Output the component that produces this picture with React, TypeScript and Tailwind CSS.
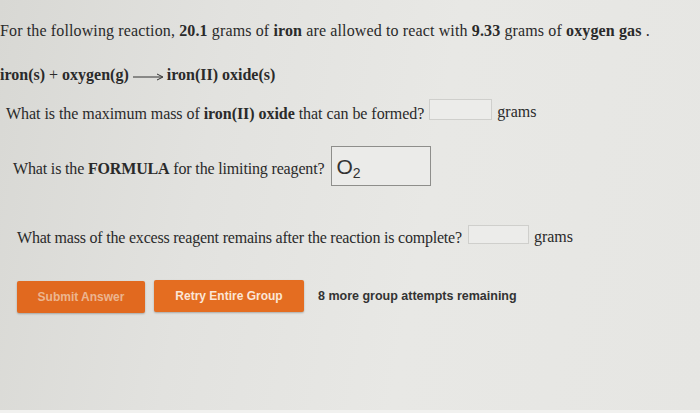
import React from 'react'

// Empty answer box, light border like the disabled inputs in the shot
function AnswerBox({ w, h }: { w: string; h: string }) {
  return <div className={`${w} ${h} shrink-0 border border-[#cfcfcc] bg-[#ececea]`} />
}

function Arrow() {
  return (
    <svg width="32" height="10" viewBox="0 0 32 10" className="mx-[3px] mb-[3px] shrink-0">
      <line x1="1" y1="5" x2="30" y2="5" stroke="#333" strokeWidth="1" />
      <path d="M25 2 L31 5 L25 8" fill="none" stroke="#333" strokeWidth="1" />
    </svg>
  )
}

export default function App() {
  return (
    <div
      className="relative w-[700px] h-[413px] overflow-hidden text-[#2a2a2a] bg-[linear-gradient(100deg,#d8d8d4_0%,#e2e2df_30%,#e8e8e5_60%,#e6e6e3_100%)]"
      style={{ fontFamily: '"Liberation Serif", "Times New Roman", serif' }}
    >
      <div className="flex flex-col pt-[21px] text-[16px] leading-[20px]">
        {/* question stem */}
        <p className="whitespace-nowrap tracking-[0.13px]">
          For the following reaction, <b>20.1</b> grams of <b>iron</b> are allowed to react with <b>9.33</b> grams of{' '}
          <b>oxygen gas</b> .
        </p>

        {/* equation */}
        <div className="mt-[24px] flex items-end whitespace-nowrap font-bold">
          <span>iron(s)</span>
          <span className="font-normal mx-[4px]">+</span>
          <span>oxygen(g)</span>
          <Arrow />
          <span>iron(II) oxide(s)</span>
        </div>

        {/* part 1 */}
        <div className="mt-[14px] ml-[6px] flex items-start whitespace-nowrap">
          <span className="mt-[5px] tracking-[-0.05px]">
            What is the maximum mass of <b>iron(II) oxide</b> that can be formed?
          </span>
          <div className="ml-[5px]">
            <AnswerBox w="w-[63px]" h="h-[21px]" />
          </div>
          <span className="ml-[5px] mt-[3px]">grams</span>
        </div>

        {/* part 2 */}
        <div className="mt-[22px] ml-[13px] flex items-start whitespace-nowrap">
          <span className="mt-[13px] tracking-[-0.16px]">
            What is the <b>FORMULA</b> for the limiting reagent?
          </span>
          <div
            className="ml-[7px] w-[100px] h-[40px] border border-[#8e8e8b] bg-[#ebebe9] pl-[4px] flex items-center text-[#333]"
            style={{ fontFamily: '"Liberation Sans", Arial, sans-serif' }}
          >
            <span className="text-[21px] leading-none">O</span>
            <span className="text-[14px] leading-none mt-[14px]">2</span>
          </div>
        </div>

        {/* part 3 */}
        <div className="mt-[39px] ml-[17px] flex items-start whitespace-nowrap">
          <span className="mt-[3px] tracking-[-0.21px]">
            What mass of the excess reagent remains after the reaction is complete?
          </span>
          <div className="ml-[6px]">
            <AnswerBox w="w-[61px]" h="h-[19px]" />
          </div>
          <span className="ml-[5px] mt-[2px]">grams</span>
        </div>

        {/* actions */}
        <div
          className="mt-[31px] ml-[17px] flex items-center gap-[9px] text-[12px] font-bold"
          style={{ fontFamily: '"Liberation Sans", Arial, sans-serif' }}
        >
          <button className="w-[128px] h-[32px] mt-[2px] rounded-[2px] bg-[#e1691f] text-[#ecb58f] shadow-[0_1px_2px_rgba(0,0,0,0.25)]">
            Submit Answer
          </button>
          <button className="w-[150px] h-[32px] rounded-[2px] bg-[#e46d21] text-[#fbe6d6] shadow-[0_1px_2px_rgba(0,0,0,0.25)]">
            Retry Entire Group
          </button>
          <span className="ml-[5px] text-[12.5px] text-[#333]">8 more group attempts remaining</span>
        </div>
      </div>

      <div className="absolute bottom-0 left-0 w-full h-[3px] bg-[#f1f1ef]" />
    </div>
  )
}
